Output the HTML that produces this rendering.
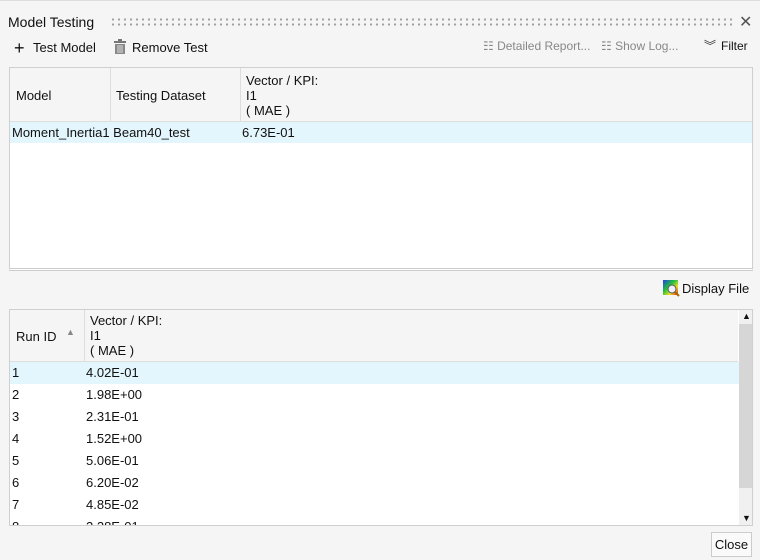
<!DOCTYPE html>
<html><head><style>
*{box-sizing:border-box;margin:0;padding:0}
body{width:760px;height:560px;background:#f5f5f5;font-family:"Liberation Sans",sans-serif;font-size:13px;color:#111;position:relative;overflow:hidden;border-top:1px solid #ddd}
.a{position:absolute;white-space:nowrap}
.dots{position:absolute;left:110px;top:16px;width:622px;height:10px;background-image:radial-gradient(circle,#a0a0a0 1px,transparent 1.3px);background-size:6px 5px}
.tbl{position:absolute;background:#fff;border:1px solid #cfcfcf}
.hdr{position:absolute;left:0;top:0;right:0;background:#f5f5f5;border-bottom:1px solid #ddd}
.vl{position:absolute;top:0;width:1px;background:#ddd}
.sel{position:absolute;left:0;background:#e3f6fd}
</style></head><body>
<div class="a" style="left:8px;top:13px;font-size:14px">Model Testing</div>
<div class="dots"></div>
<div class="a" style="left:739px;top:11px;font-size:16px;color:#555">✕</div>
<div class="a" style="left:14px;top:38px;font-size:18px;line-height:18px">+</div>
<div class="a" style="left:33px;top:39px">Test Model</div>
<svg class="a" style="left:113px;top:38px" width="14" height="15"><rect x="1" y="2" width="12" height="2" fill="#777"/><rect x="5" y="0" width="4" height="2" fill="#777"/><rect x="2" y="5" width="10" height="10" fill="#888"/><path d="M5 6v8M7 6v8M9 6v8" stroke="#ddd"/></svg>
<div class="a" style="left:132px;top:39px">Remove Test</div>
<div class="a" style="left:483px;top:38px;font-size:12px;color:#888">☷ Detailed Report...</div>
<div class="a" style="left:601px;top:38px;font-size:12px;color:#888">☷ Show Log...</div>
<div class="a" style="left:704px;top:36px;font-size:12px;color:#333">︾</div>
<div class="a" style="left:721px;top:38px;font-size:12px">Filter</div>

<div class="tbl" style="left:9px;top:66px;width:744px;height:204px;border-bottom:3px double #ccc">
<div class="hdr" style="height:54px"></div>
<div class="vl" style="left:100px;height:54px"></div>
<div class="vl" style="left:230px;height:54px"></div>
<div class="a" style="left:6px;top:20px">Model</div>
<div class="a" style="left:106px;top:20px">Testing Dataset</div>
<div class="a" style="left:236px;top:5px;line-height:15px">Vector / KPI:<br>I1<br>( MAE )</div>
<div class="sel" style="top:54px;width:742px;height:21px"></div>
<div class="a" style="left:2px;top:57px">Moment_Inertia1 Beam40_test</div>
<div class="a" style="left:232px;top:57px">6.73E-01</div>
</div>

<svg class="a" style="left:662px;top:278px" width="18" height="18"><defs><linearGradient id="g" x1="0" y1="0" x2="1" y2="1"><stop offset="0" stop-color="#2040e0"/><stop offset=".4" stop-color="#20c040"/><stop offset=".7" stop-color="#f0e020"/><stop offset="1" stop-color="#e02020"/></linearGradient></defs><rect x="1" y="1" width="15" height="15" fill="url(#g)"/><circle cx="10" cy="10" r="4" fill="#eef" stroke="#555"/><path d="M13 13l4 4" stroke="#a60" stroke-width="2"/></svg>
<div class="a" style="left:682px;top:280px">Display File</div>

<div class="tbl" style="left:9px;top:308px;width:744px;height:217px;overflow:hidden">
<div class="hdr" style="height:52px;right:14px"></div>
<div class="vl" style="left:74px;height:52px"></div>
<div class="a" style="left:6px;top:19px">Run ID</div>
<div class="a" style="left:56px;top:17px;font-size:9px;color:#888">▲</div>
<div class="a" style="left:80px;top:3px;line-height:15px">Vector / KPI:<br>I1<br>( MAE )</div>
<div class="sel" style="top:52px;width:729px;height:22px"></div>
<div class="a" style="left:2px;top:52px;line-height:22px">1<br>2<br>3<br>4<br>5<br>6<br>7<br>8</div>
<div class="a" style="left:76px;top:52px;line-height:22px">4.02E-01<br>1.98E+00<br>2.31E-01<br>1.52E+00<br>5.06E-01<br>6.20E-02<br>4.85E-02<br>2.28E-01</div>
<div class="a" style="left:729px;top:0;width:14px;height:215px;background:#f0f0f0"></div>
<div class="a" style="left:729px;top:14px;width:14px;height:164px;background:#d6d6d6"></div>
<div class="a" style="left:732px;top:1px;font-size:9px">▲</div>
<div class="a" style="left:732px;top:203px;font-size:9px">▼</div>
</div>

<div class="a" style="left:711px;top:531px;width:41px;height:25px;border:1px solid #ccc;background:#fafafa;text-align:center;line-height:23px">Close</div>
</body></html>
